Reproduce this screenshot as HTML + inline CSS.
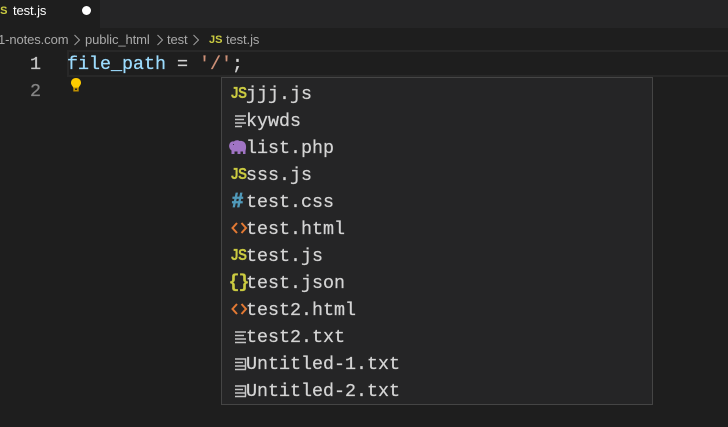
<!DOCTYPE html>
<html><head><meta charset="utf-8">
<style>
html,body{margin:0;padding:0;background:#1e1e1e}
#r{position:relative;width:728px;height:427px;overflow:hidden;background:#1e1e1e;font-family:"Liberation Mono",monospace}
.a{position:absolute;white-space:pre}
.ui{font-family:"Liberation Sans",sans-serif;font-size:13px;color:#a9a9a9;letter-spacing:-.1px}
.code{font-size:18.33px;line-height:27px;height:27px;-webkit-text-stroke:.25px currentColor}
.it{left:246px;color:#d4d4d4;font-size:18.33px;line-height:27px;height:27px;-webkit-text-stroke:.25px currentColor}
.js{left:231px;color:#cbcb41;font:bold 15.5px/27px "Liberation Sans",sans-serif;letter-spacing:-.4px;transform:scaleX(.86);transform-origin:0 50%;-webkit-text-stroke:.2px currentColor}
svg.a{overflow:visible}
</style></head><body><div id="r">
<div class="a" style="left:0;top:0;width:728px;height:28px;background:#252526"></div>
<div class="a" style="left:0;top:0;width:100px;height:28px;background:#1e1e1e"></div>
<div class="a" style="left:-6px;top:3px;color:#cbcb41;font:bold 11px/16px 'Liberation Sans',sans-serif">JS</div>
<div class="a ui" style="left:13px;top:3px;color:#fff;line-height:16px">test.js</div>
<div class="a" style="left:82px;top:6px;width:9px;height:9px;border-radius:50%;background:#fff"></div>

<div class="a ui" style="left:-2px;top:32px;line-height:16px">1-notes.com</div>
<svg class="a" style="left:73px;top:34px" width="8" height="12"><path d="M1.5 1L6.5 6L1.5 11" fill="none" stroke="#a0a0a0" stroke-width="1"/></svg>
<div class="a ui" style="left:85px;top:32px;line-height:16px">public_html</div>
<svg class="a" style="left:156px;top:34px" width="8" height="12"><path d="M1.5 1L6.5 6L1.5 11" fill="none" stroke="#a0a0a0" stroke-width="1"/></svg>
<div class="a ui" style="left:167px;top:32px;line-height:16px">test</div>
<svg class="a" style="left:192px;top:34px" width="8" height="12"><path d="M1.5 1L6.5 6L1.5 11" fill="none" stroke="#a0a0a0" stroke-width="1"/></svg>
<div class="a" style="left:209px;top:32px;color:#cbcb41;font:bold 11px/16px 'Liberation Sans',sans-serif">JS</div>
<div class="a ui" style="left:226px;top:32px;line-height:16px">test.js</div>

<div class="a" style="left:67px;top:50px;width:661px;border-top:2px solid #282828;border-bottom:2px solid #282828;border-left:2px solid #282828;box-sizing:border-box;height:27px"></div>
<div class="a code" style="left:30px;top:51px;color:#c6c6c6">1</div>
<div class="a code" style="left:30px;top:78px;color:#858585">2</div>
<div class="a code" style="left:67px;top:51px;color:#d4d4d4"><span style="color:#9cdcfe">file_path</span> = <span style="color:#ce9178">'/'</span>;</div>
<svg class="a" style="left:70px;top:78px" width="12" height="14"><path d="M6 0C2.8 0 1 2.3 1 4.8C1 6.8 2.4 7.8 3.2 9.5H8.8C9.6 7.8 11 6.8 11 4.8C11 2.3 9.2 0 6 0Z" fill="#ffcc00"/><rect x="3.3" y="9.5" width="5.4" height="4" fill="#c09000"/><rect x="5" y="10.5" width="2" height="1.5" fill="#222"/></svg>

<div class="a" style="left:221px;top:77px;width:432px;height:328px;box-sizing:border-box;background:#252526;border:1px solid #454545"></div>

<div class="a js" style="top:80px">JS</div><div class="a it" style="top:81px">jjj.js</div>
<svg class="a" style="left:235px;top:115px" width="12" height="13"><path d="M0 1H11M0 4.5H9M0 8H11M0 11.5H7" fill="none" stroke="#c5c5c5" stroke-width="1.5"/></svg><div class="a it" style="top:108px">kywds</div>
<svg class="a" style="left:229px;top:140px" width="18" height="15"><path d="M2.5 14V10.5C0.5 9 -0.5 6.5 0.5 4C1.2 2 3 1 5 1.5C6.5 0 9 0 10.5 1C13 0.5 15.5 1.5 16.5 4C17.5 6.5 17 9 16.5 11V14H14V11.5H11.5V14H8.5V11.5H5.5V14Z" fill="#a074c4"/><rect x="4" y="4" width="1" height="1" fill="#3d2d4d"/></svg><div class="a it" style="top:135px">list.php</div>
<div class="a js" style="top:161px">JS</div><div class="a it" style="top:162px">sss.js</div>
<div class="a" style="left:232px;top:188px;color:#519aba;font:bold 20px/27px 'Liberation Sans',sans-serif;-webkit-text-stroke:.8px #519aba">#</div><div class="a it" style="top:189px">test.css</div>
<svg class="a" style="left:231px;top:222px" width="16" height="13"><path d="M6 1L1.5 6L6 11M10.5 1L15 6L10.5 11" fill="none" stroke="#e37933" stroke-width="2"/></svg><div class="a it" style="top:216px">test.html</div>
<div class="a js" style="top:242px">JS</div><div class="a it" style="top:243px">test.js</div>
<div class="a" style="left:228.5px;top:269px;color:#cbcb41;font:bold 18.33px/27px 'Liberation Mono',monospace;letter-spacing:-1px;-webkit-text-stroke:.2px currentColor">{}</div><div class="a it" style="top:270px">test.json</div>
<svg class="a" style="left:231px;top:303px" width="16" height="13"><path d="M6 1L1.5 6L6 11M10.5 1L15 6L10.5 11" fill="none" stroke="#e37933" stroke-width="2"/></svg><div class="a it" style="top:297px">test2.html</div>
<svg class="a" style="left:235px;top:331px" width="12" height="13"><path d="M0 1H11M0 4.5H9M0 8H11M0 11.5H11" fill="none" stroke="#c5c5c5" stroke-width="1.5"/></svg><div class="a it" style="top:324px">test2.txt</div>
<svg class="a" style="left:235px;top:358px" width="12" height="13"><path d="M0 1H10.5V11.5M0 4.5H8M0 8H10.5M0 11.5H11" fill="none" stroke="#c5c5c5" stroke-width="1.5"/></svg><div class="a it" style="top:351px">Untitled-1.txt</div>
<svg class="a" style="left:235px;top:385px" width="12" height="13"><path d="M0 1H10.5V11.5M0 4.5H8M0 8H10.5M0 11.5H11" fill="none" stroke="#c5c5c5" stroke-width="1.5"/></svg><div class="a it" style="top:378px">Untitled-2.txt</div>
</div></body></html>
